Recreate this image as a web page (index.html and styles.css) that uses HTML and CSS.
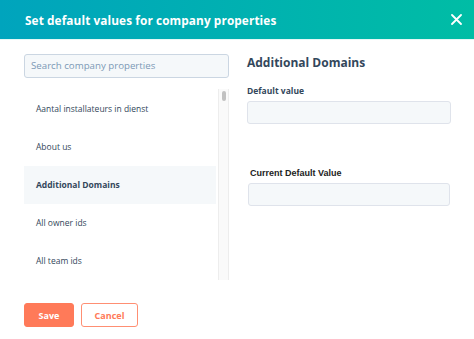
FILE: index.html
```html
<!DOCTYPE html>
<html lang="en">

<head>
    <meta charset="utf-8">
    <meta name="viewport" content="width=device-width, initial-scale=1.0">
    <title>Set default values</title>

    <link rel="stylesheet" href="styles.css">

</head>

<body>
    <header class="modal_head">
        <h1>Set default values for company properties</h1>
        <button class="close" aria-label="Close">
            <svg width="11" height="11" viewBox="0 0 11 11">
                <path d="M1 1 L10 10 M10 1 L1 10" stroke="#fff" stroke-width="1.8" stroke-linecap="round" />
            </svg>
        </button>
    </header>

    <main class="modal_body">
        <section class="left_col">
            <div class="search">Search company properties</div>
            <div class="list_wrap">
                <ul class="prop_list">
                    <li>Aantal installateurs in dienst</li>
                    <li>About us</li>
                    <li class="valgt">Additional Domains</li>
                    <li>All owner ids</li>
                    <li>All team ids</li>
                </ul>
                <div class="scroll_track">
                    <div class="scroll_thumb"></div>
                </div>
            </div>
        </section>

        <section class="right_col">
            <h2>Additional Domains</h2>
            <label class="lbl">Default value</label>
            <div class="field"></div>
            <label class="lbl current">Current Default Value</label>
            <div class="field field_current"></div>
        </section>
    </main>

    <footer class="modal_foot">
        <button class="btn save">Save</button>
        <button class="btn cancel">Cancel</button>
    </footer>
</body>

</html>
```

FILE: styles.css
```css
body {
    margin: 0;
    background-color: #fff;
    font-family: "Open Sans", sans-serif;
    color: #33475b;
    width: 474px;
    height: 339px;
    overflow: hidden;
}

.modal_head {
    height: 39px;
    background: linear-gradient(90deg, #00a4bd 0%, #00bda5 100%);
    display: flex;
    align-items: center;
    justify-content: space-between;
    padding: 0 10px 0 25px;
    border-bottom: 1px solid #e5f8f6;
}

.modal_head h1 {
    margin: 0;
    font-size: 11.8px;
    font-weight: 700;
    color: #fff;
    letter-spacing: 0.1px;
}

.close {
    background: none;
    border: none;
    padding: 0;
    width: 16px;
    height: 16px;
    display: flex;
    align-items: center;
    justify-content: center;
}

.modal_body {
    display: flex;
    padding: 14px 0 0 24px;
    height: 241px;
}

.left_col {
    width: 205px;
}

.search {
    box-sizing: border-box;
    height: 24px;
    border: 1px solid #cbd6e2;
    border-radius: 3px;
    background-color: #f5f8fa;
    font-size: 9.7px;
    color: #7c98b6;
    padding: 4px 6px;
    line-height: 14px;
}

.list_wrap {
    display: flex;
    margin-top: 11px;
    height: 191px;
}

.prop_list {
    list-style: none;
    margin: 0;
    padding: 0;
    width: 194px;
    padding-top: 1px;
}

.prop_list li {
    height: 38px;
    line-height: 38px;
    padding-left: 12px;
    font-size: 8.5px;
    color: #33475b;
}

.prop_list .valgt {
    background-color: #f5f8fa;
    font-weight: 700;
}

.scroll_track {
    width: 9px;
    margin-left: 2px;
    background-color: #fafafa;
    border-left: 1px solid #ededed;
    border-right: 1px solid #ededed;
}

.scroll_thumb {
    width: 4px;
    height: 10px;
    margin: 2px auto 0;
    border-radius: 2px;
    background-color: #c1c1c1;
}

.right_col {
    margin-left: 18px;
    width: 204px;
    display: flex;
    flex-direction: column;
}

.right_col h2 {
    margin: 0;
    font-size: 12px;
    font-weight: 700;
    line-height: 16px;
    margin-top: 1px;
}

.lbl {
    font-size: 8.5px;
    font-weight: 700;
    margin-top: 14px;
    line-height: 12px;
}

.field {
    margin-top: 4px;
    height: 23px;
    border: 1px solid #dfe3eb;
    border-radius: 3px;
    background-color: #f5f8fa;
    box-sizing: border-box;
}

.current {
    font-family: "Liberation Sans", Arial, sans-serif;
    font-size: 9px;
    margin-top: 43px;
    margin-left: 3px;
    color: #222;
}

.field_current {
    margin-left: 1px;
    width: 202px;
    margin-top: 4px;
}

.modal_foot {
    display: flex;
    gap: 7px;
    padding: 8px 0 0 24px;
}

.btn {
    height: 24px;
    border-radius: 3px;
    font-family: "Open Sans", sans-serif;
    font-size: 9px;
    font-weight: 700;
}

.save {
    width: 50px;
    background-color: #ff7a59;
    border: 1px solid #ff7a59;
    color: #fff;
}

.cancel {
    width: 57px;
    background-color: #fff;
    border: 1px solid #ff8f73;
    color: #ff7a59;
}
```
